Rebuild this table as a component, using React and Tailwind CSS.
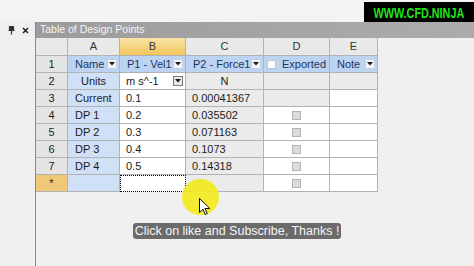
import React from 'react'

const COLS = 'grid grid-cols-[32px_52px_66px_78px_66px_48px]'

function DropBtn({ combo }) {
  return (
    <span
      className={`ml-auto mr-[2px] w-[10px] h-[10px] flex items-center justify-center shrink-0 ${
        combo ? 'bg-[#e8e8e8] border border-[#7a7a7a]' : 'bg-[#f2f4f8] border border-[#c8d2e0]'
      }`}
    >
      <svg width="6" height="4" viewBox="0 0 6 4">
        <path d="M0 0h6L3 3.5z" fill="#1a1a1a" />
      </svg>
    </span>
  )
}

function Check({ white }) {
  return (
    <span
      className={`w-[9px] h-[9px] border shrink-0 ${
        white ? 'bg-white border-[#b8c4d4]' : 'bg-[#dcdcdc] border-[#b4b4b4]'
      }`}
    />
  )
}

function Cell({ bg, className = '', children }) {
  return (
    <div className={`h-[17px] border-r border-b border-[#b2b2b2] flex items-center text-[11px] text-[#1c1c1c] ${bg} ${className}`}>
      {children}
    </div>
  )
}

const GRAY = 'bg-[#ebebeb]'
const BLUE = 'bg-[#cfe0f7]'
const HEAD = 'bg-[#e4e4e4]'

const DATA = [
  ['3', 'Current', '0.1', '0.00041367', false],
  ['4', 'DP 1', '0.2', '0.035502', true],
  ['5', 'DP 2', '0.3', '0.071163', true],
  ['6', 'DP 3', '0.4', '0.1073', true],
  ['7', 'DP 4', '0.5', '0.14318', true],
]

function Table() {
  return (
    <div className="w-[342px]">
      <div className={COLS}>
        {['', 'A', 'B', 'C', 'D', 'E'].map((l, i) => (
          <div
            key={i}
            className={`h-[18px] border-r border-b border-[#b2b2b2] flex items-center justify-center text-[11px] text-[#333] ${
              l === 'B' ? 'bg-gradient-to-b from-[#fae4a6] to-[#f0c458]' : 'bg-[#e9e9e9]'
            }`}
          >
            {l}
          </div>
        ))}
      </div>

      <div className={COLS}>
        <Cell bg={HEAD} className="justify-center">1</Cell>
        <Cell bg="bg-[#bcd4f1]" className="pl-[7px] text-[#1e3560]">Name<DropBtn /></Cell>
        <Cell bg="bg-[#bcd4f1]" className="pl-[7px] text-[#1e3560]">P1 - Vel1<DropBtn /></Cell>
        <Cell bg="bg-[#bcd4f1]" className="pl-[7px] text-[#1e3560]">P2 - Force1<DropBtn /></Cell>
        <Cell bg="bg-[#bcd4f1]" className="pl-[3px] gap-[6px] text-[#1e3560]"><Check white />Exported</Cell>
        <Cell bg="bg-[#bcd4f1]" className="pl-[7px] text-[#1e3560]">Note<DropBtn /></Cell>

        <Cell bg={HEAD} className="justify-center">2</Cell>
        <Cell bg={BLUE} className="justify-center">Units</Cell>
        <Cell bg="bg-white" className="pl-[6px]">m s^-1<DropBtn combo /></Cell>
        <Cell bg={GRAY} className="justify-center">N</Cell>
        <Cell bg={GRAY} />
        <Cell bg={GRAY} />

        {DATA.map(([n, a, b, c, chk]) => (
          <React.Fragment key={n}>
            <Cell bg={HEAD} className="justify-center">{n}</Cell>
            <Cell bg={BLUE} className="pl-[7px]">{a}</Cell>
            <Cell bg="bg-white" className="pl-[6px]">{b}</Cell>
            <Cell bg={GRAY} className="pl-[6px]">{c}</Cell>
            <Cell bg={chk ? 'bg-white' : GRAY} className="justify-center">{chk && <Check />}</Cell>
            <Cell bg="bg-white" />
          </React.Fragment>
        ))}

        <Cell bg="bg-[#f1c878]" className="justify-center text-[8px]">*</Cell>
        <Cell bg={BLUE} />
        <Cell bg="bg-white" className="border border-dotted !border-black" />
        <Cell bg={GRAY} />
        <Cell bg="bg-white" className="justify-center"><Check /></Cell>
        <Cell bg="bg-white" />
      </div>
    </div>
  )
}

export default function App() {
  return (
    <div className="relative w-[474px] h-[266px] overflow-hidden bg-[#f0f0f0] font-['Liberation_Sans',Arial,sans-serif]">
      <div className="h-[22px] flex justify-end bg-[#f3f3f3]">
        <div className="mt-[2px] h-[20px] w-[110px] bg-black flex items-center justify-center">
          <span className="inline-block scale-x-[0.72] font-['Liberation_Sans',sans-serif] font-bold text-[15px] leading-none text-[#22e41e]">
            WWW.CFD.NINJA
          </span>
        </div>
      </div>

      <div className="flex h-[244px]">
        <div className="w-[36px] shrink-0 border-r border-[#8a8a8a]">
          <div className="h-[16px] flex items-center pl-[8px] gap-[7px]">
            <svg width="7" height="9" viewBox="0 0 7 9">
              <path d="M1 0.5h5M1.5 0.5v4M5.5 0.5v4M0.5 4.5h6M3.5 4.5v4" stroke="#333" strokeWidth="1.2" fill="none" />
              <rect x="2" y="1" width="3" height="3.5" fill="#333" />
            </svg>
            <svg width="7" height="7" viewBox="0 0 7 7">
              <path d="M1 1l5 5M6 1l-5 5" stroke="#222" strokeWidth="1.5" />
            </svg>
          </div>
        </div>

        <div className="flex-1 flex flex-col">
          <div className="h-[16px] bg-gradient-to-r from-[#9c9c9c] to-[#acacac] flex items-center pl-[4px] text-[10.5px] text-[#f4f4f4]">
            Table of Design Points
          </div>
          <Table />
        </div>
      </div>

      <div className="absolute left-[182px] top-[179px] w-[37px] h-[36px] rounded-full bg-[#f2ea1a] opacity-90" />
      <svg className="absolute left-[199px] top-[198px]" width="12" height="18" viewBox="0 0 12 18">
        <path d="M0.5 0.5v14l3.5-3.3 2.3 5.3 2-0.9-2.3-5.1h4.8z" fill="#fff" stroke="#111" strokeWidth="1" />
      </svg>

      <div className="absolute left-[133px] top-[223px] w-[208px] h-[16px] rounded-[3px] bg-[#6b6b6b] flex items-center justify-center text-[12.5px] text-[#f6f6f6]">
        Click on like and Subscribe, Thanks !
      </div>
    </div>
  )
}
